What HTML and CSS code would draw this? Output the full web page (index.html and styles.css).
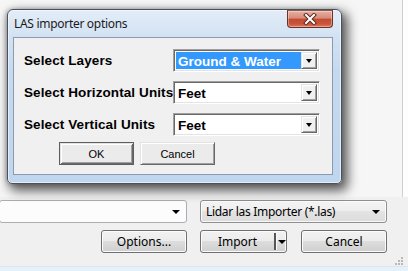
FILE: index.html
```html
<!DOCTYPE html>
<html>
<head>
<meta charset="utf-8">
<link rel="stylesheet" href="styles.css">
</head>
<body>
<div class="app">
  <div class="top-area">
    <div class="top-panel"></div>
    <div class="top-edge"></div>
  </div>
  <div class="bottom-area">
    <div class="row">
      <div class="w7combo edit"><span class="txt"></span><span class="arrow-s"></span></div>
      <div class="w7combo list"><span class="txt">Lidar las Importer (*.las)</span><span class="arrow-s"></span></div>
    </div>
    <div class="row btns">
      <div class="w7btn opt">Options...</div>
      <div class="w7btn split"><span class="main">Import</span><span class="sep"></span><span class="arr"><span class="arrow-s"></span></span></div>
      <div class="w7btn cancel">Cancel</div>
    </div>
  </div>
  <div class="status"></div>
  <div class="grip">
    <svg width="10" height="10" viewBox="0 0 10 10">
      <g fill="#b9b9b9">
        <rect x="7" y="1" width="2" height="2"/>
        <rect x="4" y="4" width="2" height="2"/><rect x="7" y="4" width="2" height="2"/>
        <rect x="1" y="7" width="2" height="2"/><rect x="4" y="7" width="2" height="2"/><rect x="7" y="7" width="2" height="2"/>
      </g>
    </svg>
  </div>
</div>

<div class="dialog">
  <div class="titlebar">LAS importer options</div>
  <div class="closebtn">
    <svg width="14" height="12" viewBox="0 0 14 12">
      <path d="M3 2 L11 10 M11 2 L3 10" stroke="#5a2a22" stroke-width="4" stroke-linecap="square" fill="none"/>
      <path d="M3 2 L11 10 M11 2 L3 10" stroke="#ffffff" stroke-width="2" stroke-linecap="square" fill="none"/>
    </svg>
  </div>
  <div class="client">
    <div class="form">
      <div class="lbl">Select Layers</div>
      <div class="cbo"><span class="val sel">Ground &amp; Water</span><span class="ddb"><span class="tri"></span></span></div>
      <div class="lbl">Select Horizontal Units</div>
      <div class="cbo"><span class="val">Feet</span><span class="ddb"><span class="tri"></span></span></div>
      <div class="lbl">Select Vertical Units</div>
      <div class="cbo"><span class="val">Feet</span><span class="ddb"><span class="tri"></span></span></div>
    </div>
    <div class="dbtns">
      <div class="cbtn default">OK</div>
      <div class="cbtn">Cancel</div>
    </div>
  </div>
</div>
</body>
</html>
```

FILE: styles.css
```css
html, body {
  margin: 0;
  padding: 0;
}
body {
  width: 408px;
  height: 271px;
  overflow: hidden;
  background: #f0f0f0;
  position: relative;
  font-family: "Noto Sans", "Liberation Sans", sans-serif;
}
.app {
  width: 408px;
  height: 271px;
  display: flex;
  flex-direction: column;
  background: #f0f0f0;
}
.top-area {
  height: 197px;
  display: flex;
}
.top-panel {
  width: 402px;
  background: #f6f6f6;
  border-right: 1px solid #cfcfcf;
}
.top-edge {
  flex: 1;
  background: #fdfdfd;
}
.bottom-area {
  padding-top: 3px;
  display: flex;
  flex-direction: column;
  gap: 7px;
}
.row {
  display: flex;
  gap: 13px;
  height: 23px;
}
.w7combo {
  box-sizing: border-box;
  height: 23px;
  border: 1px solid #8e8f8f;
  border-radius: 3px;
  display: flex;
  align-items: center;
  padding: 0 6px 0 5px;
  font-size: 12px;
  color: #000;
  background: linear-gradient(#f4f4f4 0%, #eeeeee 50%, #e3e3e3 50%, #dcdcdc 100%);
  box-shadow: inset 0 0 0 1px rgba(255,255,255,0.8);
}
.w7combo .txt {
  flex: 1;
  white-space: nowrap;
  letter-spacing: -0.3px;
}
.w7combo.edit {
  width: 188px;
  margin-left: -1px;
  background: #fcfcfc;
  border-color: #abadb3;
  box-shadow: none;
}
.w7combo.list {
  width: 187px;
}
.arrow-s {
  width: 0;
  height: 0;
  border-left: 4px solid transparent;
  border-right: 4px solid transparent;
  border-top: 4px solid #000;
}
.btns {
  justify-content: flex-end;
  padding-right: 21px;
}
.btns .opt { width: 86px; }
.w7btn {
  box-sizing: border-box;
  height: 23px;
  border: 1px solid #707070;
  border-radius: 3px;
  background: linear-gradient(#f2f2f2 0%, #ebebeb 50%, #dddddd 50%, #cfcfcf 100%);
  box-shadow: inset 0 0 0 1px #fbfbfb;
  font-size: 12px;
  color: #000;
  display: flex;
  align-items: center;
  justify-content: center;
}
.w7btn.cancel { width: 86px; }
.w7btn.split {
  width: 87px;
  justify-content: flex-start;
  margin-right: 1px;
}
.split .main {
  width: 73px;
  text-align: center;
}
.split .sep {
  width: 2px;
  height: 17px;
  background: #555;
  box-shadow: 1px 0 0 #fafafa;
}
.split .arr {
  flex: 1;
  display: flex;
  justify-content: center;
  padding-left: 1px;
}
.status {
  margin-top: 13px;
  flex: 1;
  background: #e4f1fb;
  border-top: 1px solid #d8e6f1;
}
.grip {
  position: absolute;
  left: 394px;
  top: 256px;
  width: 10px;
  height: 10px;
}
.grip svg { display: block; }

/* Dialog */
.dialog {
  position: absolute;
  left: 7px;
  top: 9px;
  width: 335px;
  height: 175px;
  box-sizing: border-box;
  border: 1px solid #4a525e;
  border-radius: 6px 6px 5px 5px;
  background: linear-gradient(#e3edf8 0px, #d3e2f3 26px, #c5daf0 60px, #c0d6ee 100%);
  box-shadow: inset 0 0 0 1px rgba(255,255,255,0.55), 4px 5px 11px 2px rgba(0,0,0,0.62), -1px 0 4px rgba(0,0,0,0.25);
  display: flex;
  flex-direction: column;
}
.titlebar {
  height: 27px;
  line-height: 27px;
  padding-left: 6px;
  font-size: 12px;
  letter-spacing: -0.3px;
  color: #1b1b1b;
  white-space: nowrap;
}
.closebtn {
  position: absolute;
  top: 0;
  right: 8px;
  width: 46px;
  height: 18px;
  box-sizing: border-box;
  border: 1px solid #6f3125;
  border-top-color: #8a5a52;
  border-radius: 0 0 4px 4px;
  background: linear-gradient(#e8b0a4 0%, #d88a79 45%, #c24a31 50%, #c9553b 80%, #d9765c 100%);
  box-shadow: inset 0 0 0 1px rgba(255,255,255,0.35);
  display: flex;
  align-items: center;
  justify-content: center;
}
.closebtn svg { display: block; }
.client {
  margin: 0 8px 0 5px;
  height: 138px;
  box-sizing: border-box;
  border: 1px solid #8a9bb0;
  background: #f0f0f0;
  padding: 11px 0 0 10px;
}
.form {
  display: grid;
  grid-template-columns: 149px 147px;
  grid-template-rows: 23px 23px 23px;
  row-gap: 9px;
  align-items: center;
}
.lbl {
  font-family: "Liberation Sans", Arial, sans-serif;
  font-weight: bold;
  font-size: 13.5px;
  letter-spacing: 0.1px;
  color: #000;
  white-space: nowrap;
}
.cbo {
  box-sizing: border-box;
  height: 23px;
  border: 1px solid;
  border-color: #a0a0a0 #ffffff #ffffff #a0a0a0;
  box-shadow: inset 1px 1px 0 #696969, inset -1px -1px 0 #e3e3e3;
  background: #fff;
  padding: 2px;
  display: flex;
}
.cbo .val {
  flex: 1;
  font-family: "Liberation Sans", Arial, sans-serif;
  font-weight: bold;
  font-size: 13.5px;
  color: #000;
  line-height: 19px;
  padding-left: 2px;
  white-space: nowrap;
}
.cbo .val.sel {
  background: #3399ff;
  color: #fff;
}
.ddb {
  width: 16px;
  box-sizing: border-box;
  background: #f0f0f0;
  border: 1px solid;
  border-color: #e3e3e3 #696969 #696969 #e3e3e3;
  box-shadow: inset 1px 1px 0 #ffffff, inset -1px -1px 0 #a0a0a0;
  display: flex;
  align-items: center;
  justify-content: center;
}
.tri {
  width: 0;
  height: 0;
  border-left: 3.5px solid transparent;
  border-right: 3.5px solid transparent;
  border-top: 4px solid #000;
  margin-top: 1px;
}
.dbtns {
  display: flex;
  gap: 6px;
  margin-top: 6px;
  padding-left: 35px;
}
.cbtn {
  box-sizing: border-box;
  width: 75px;
  height: 23px;
  background: #ebebeb;
  border: 1px solid;
  border-color: #e3e3e3 #696969 #696969 #e3e3e3;
  box-shadow: inset 1px 1px 0 #ffffff, inset -1px -1px 0 #a0a0a0;
  font-family: "Liberation Sans", Arial, sans-serif;
  font-size: 11px;
  color: #000;
  display: flex;
  align-items: center;
  justify-content: center;
}
.cbtn.default {
  border: 1px solid #5e5e5e;
  box-shadow: inset 1px 1px 0 #e3e3e3, inset -1px -1px 0 #696969, inset 2px 2px 0 #ffffff, inset -2px -2px 0 #a0a0a0;
}
```
